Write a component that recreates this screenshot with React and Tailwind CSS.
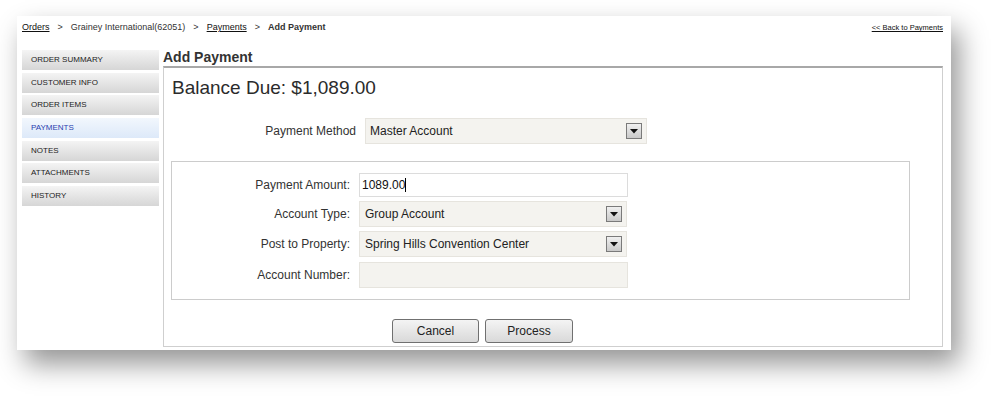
import React from "react";

const navItems = [
  "ORDER SUMMARY",
  "CUSTOMER INFO",
  "ORDER ITEMS",
  "PAYMENTS",
  "NOTES",
  "ATTACHMENTS",
  "HISTORY",
];

function ArrowButton() {
  return (
    <div className="absolute right-[4px] top-1/2 -translate-y-1/2 w-[16px] h-[16px] border border-[#7a7a7a] bg-gradient-to-b from-[#f0f0f0] to-[#c9c9c9] flex items-center justify-center">
      <svg width="8" height="5" viewBox="0 0 8 5">
        <path d="M0 0 L8 0 L4 4.5 Z" fill="#111" />
      </svg>
    </div>
  );
}

function SelectBox({ value, className }) {
  return (
    <div
      className={
        "relative h-[26px] bg-[#f4f3ef] border border-[#e6e4de] flex items-center text-[12px] text-[#222] " +
        className
      }
    >
      {value}
      <ArrowButton />
    </div>
  );
}

function FormRow({ label, children, className = "" }) {
  return (
    <div className={"flex items-center " + className}>
      <div className="w-[187px] pr-[9px] text-right text-[12px] text-[#333]">{label}</div>
      {children}
    </div>
  );
}

export default function App() {
  return (
    <div className="w-[999px] h-[398px] bg-white overflow-hidden font-['Liberation_Sans',Arial,sans-serif] pt-[16px] pl-[17px]">
      <div className="w-[934px] h-[334px] bg-white shadow-[8px_14px_26px_rgba(0,0,0,0.42)] pl-[5px] pr-[8px] pt-[6px]">
        {/* breadcrumb */}
        <div className="flex items-center h-[12px] text-[9px] text-[#333]">
          <span className="underline text-[#111]">Orders</span>
          <span className="mx-[8px]">&gt;</span>
          <span>Grainey International(62051)</span>
          <span className="mx-[8px]">&gt;</span>
          <span className="underline text-[#111]">Payments</span>
          <span className="mx-[8px]">&gt;</span>
          <span className="font-bold">Add Payment</span>
          <span className="ml-auto text-[7.5px] underline text-[#111]">&lt;&lt; Back to Payments</span>
        </div>

        <div className="flex mt-[15px]">
          {/* sidebar */}
          <div className="w-[137px] flex flex-col gap-[2.67px] mt-[1px]">
            {navItems.map((item) =>
              item === "PAYMENTS" ? (
                <div
                  key={item}
                  className="h-[20px] flex items-center pl-[9px] text-[8px] text-[#2a3fb0] bg-gradient-to-b from-[#f2f7fd] to-[#dde9f9]"
                >
                  {item}
                </div>
              ) : (
                <div
                  key={item}
                  className="h-[20px] flex items-center pl-[9px] text-[8px] text-[#222] bg-gradient-to-b from-[#f4f4f4] to-[#d6d6d6]"
                >
                  {item}
                </div>
              )
            )}
          </div>

          {/* main */}
          <div className="ml-[4px] w-[780px]">
            <div className="h-[17px] flex items-center text-[14px] font-bold text-[#333]">Add Payment</div>
            <div className="h-[281px] border border-[#cfcfcf] border-t-2 border-t-[#a8a8a8] px-[7px]">
              <div className="h-[40px] flex items-center pl-[1px] text-[19px] text-[#2b2b2b]">
                Balance Due: $1,089.00
              </div>

              <div className="flex items-center mt-[10px]">
                <div className="w-[194px] pr-[9px] text-right text-[12px] text-[#333]">Payment Method</div>
                <SelectBox value="Master Account" className="w-[282px] pl-[4px]" />
              </div>

              <div className="mt-[17px] w-[739px] h-[139px] border border-[#cccccc] pt-[11px]">
                <FormRow label="Payment Amount:">
                  <div className="w-[269px] h-[24px] bg-white border border-[#dcdcdc] flex items-center pl-[2px] text-[12px] text-[#111]">
                    1089.00
                    <span className="inline-block w-[1px] h-[14px] bg-black" />
                  </div>
                </FormRow>
                <FormRow label="Account Type:" className="mt-[4px]">
                  <SelectBox value="Group Account" className="w-[268px] pl-[5px]" />
                </FormRow>
                <FormRow label="Post to Property:" className="mt-[4px]">
                  <SelectBox value="Spring Hills Convention Center" className="w-[268px] pl-[5px]" />
                </FormRow>
                <FormRow label="Account Number:" className="mt-[5px]">
                  <div className="w-[269px] h-[26px] bg-[#f4f3ef] border border-[#e6e4de]" />
                </FormRow>
              </div>

              <div className="flex gap-[6px] mt-[19px] ml-[221px]">
                <button className="w-[87px] h-[24px] rounded-[3px] border border-[#707070] bg-gradient-to-b from-[#f4f4f4] to-[#d9d9d9] text-[12px] text-[#222]">
                  Cancel
                </button>
                <button className="w-[88px] h-[24px] rounded-[3px] border border-[#707070] bg-gradient-to-b from-[#f4f4f4] to-[#d9d9d9] text-[12px] text-[#222]">
                  Process
                </button>
              </div>
            </div>
          </div>
        </div>
      </div>
    </div>
  );
}
